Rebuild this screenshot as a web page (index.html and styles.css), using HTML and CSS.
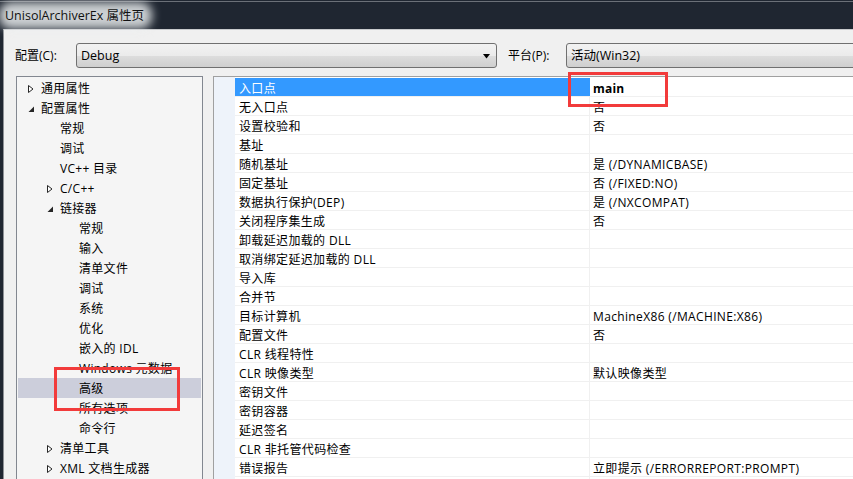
FILE: index.html
```html
<!DOCTYPE html>
<html lang="zh-CN">
<head>
<meta charset="utf-8">
<title>UnisolArchiverEx 属性页</title>
<link rel="stylesheet" href="styles.css">
</head>
<body>
<div class="titlebar"><span class="title">UnisolArchiverEx 属性页</span></div>
<div class="window">
  <div class="toolbar">
    <span class="label label-config">配置(C):</span>
    <div class="combo combo-config">
      <span class="combo-text">Debug</span>
      <svg class="combo-arrow" width="8" height="5" viewBox="0 0 8 5"><path d="M0 0H7L3.5 4.5Z" fill="#000"/></svg>
    </div>
    <span class="label label-platform">平台(P):</span>
    <div class="combo combo-platform">
      <span class="combo-text">活动(Win32)</span>
    </div>
  </div>
  <div class="panes">
    <div class="tree">
      <div class="node lvl0"><svg class="tw" width="8" height="10" viewBox="0 0 8 10"><path d="M1.5 1.5L6 5L1.5 8.5Z" fill="#fff" stroke="#262626" stroke-width="1"/></svg><span>通用属性</span></div>
      <div class="node lvl0"><svg class="tw" width="8" height="10" viewBox="0 0 8 10"><path d="M7 2.5V8H1.5Z" fill="#262626"/></svg><span>配置属性</span></div>
      <div class="node lvl1 leaf"><span>常规</span></div>
      <div class="node lvl1 leaf"><span>调试</span></div>
      <div class="node lvl1 leaf"><span>VC++ 目录</span></div>
      <div class="node lvl1"><svg class="tw" width="8" height="10" viewBox="0 0 8 10"><path d="M1.5 1.5L6 5L1.5 8.5Z" fill="#fff" stroke="#262626" stroke-width="1"/></svg><span>C/C++</span></div>
      <div class="node lvl1"><svg class="tw" width="8" height="10" viewBox="0 0 8 10"><path d="M7 2.5V8H1.5Z" fill="#262626"/></svg><span>链接器</span></div>
      <div class="node lvl2 leaf"><span>常规</span></div>
      <div class="node lvl2 leaf"><span>输入</span></div>
      <div class="node lvl2 leaf"><span>清单文件</span></div>
      <div class="node lvl2 leaf"><span>调试</span></div>
      <div class="node lvl2 leaf"><span>系统</span></div>
      <div class="node lvl2 leaf"><span>优化</span></div>
      <div class="node lvl2 leaf"><span>嵌入的 IDL</span></div>
      <div class="node lvl2 leaf"><span>Windows 元数据</span></div>
      <div class="node lvl2 leaf selected"><span>高级</span></div>
      <div class="node lvl2 leaf"><span>所有选项</span></div>
      <div class="node lvl2 leaf"><span>命令行</span></div>
      <div class="node lvl1"><svg class="tw" width="8" height="10" viewBox="0 0 8 10"><path d="M1.5 1.5L6 5L1.5 8.5Z" fill="#fff" stroke="#262626" stroke-width="1"/></svg><span>清单工具</span></div>
      <div class="node lvl1"><svg class="tw" width="8" height="10" viewBox="0 0 8 10"><path d="M1.5 1.5L6 5L1.5 8.5Z" fill="#fff" stroke="#262626" stroke-width="1"/></svg><span>XML 文档生成器</span></div>
    </div>
    <div class="grid">
      <div class="gutter"></div>
      <div class="rows">
        <div class="row selected"><div class="name">入口点</div><div class="value bold">main</div></div>
        <div class="row"><div class="name">无入口点</div><div class="value">否</div></div>
        <div class="row"><div class="name">设置校验和</div><div class="value">否</div></div>
        <div class="row"><div class="name">基址</div><div class="value"></div></div>
        <div class="row"><div class="name">随机基址</div><div class="value">是 (/DYNAMICBASE)</div></div>
        <div class="row"><div class="name">固定基址</div><div class="value">否 (/FIXED:NO)</div></div>
        <div class="row"><div class="name">数据执行保护(DEP)</div><div class="value">是 (/NXCOMPAT)</div></div>
        <div class="row"><div class="name">关闭程序集生成</div><div class="value">否</div></div>
        <div class="row"><div class="name">卸载延迟加载的 DLL</div><div class="value"></div></div>
        <div class="row"><div class="name">取消绑定延迟加载的 DLL</div><div class="value"></div></div>
        <div class="row"><div class="name">导入库</div><div class="value"></div></div>
        <div class="row"><div class="name">合并节</div><div class="value"></div></div>
        <div class="row"><div class="name">目标计算机</div><div class="value">MachineX86 (/MACHINE:X86)</div></div>
        <div class="row"><div class="name">配置文件</div><div class="value">否</div></div>
        <div class="row"><div class="name">CLR 线程特性</div><div class="value"></div></div>
        <div class="row"><div class="name">CLR 映像类型</div><div class="value">默认映像类型</div></div>
        <div class="row"><div class="name">密钥文件</div><div class="value"></div></div>
        <div class="row"><div class="name">密钥容器</div><div class="value"></div></div>
        <div class="row"><div class="name">延迟签名</div><div class="value"></div></div>
        <div class="row"><div class="name">CLR 非托管代码检查</div><div class="value"></div></div>
        <div class="row"><div class="name">错误报告</div><div class="value">立即提示 (/ERRORREPORT:PROMPT)</div></div>
        <div class="row"><div class="name">&nbsp;</div><div class="value"></div></div>
      </div>
    </div>
  </div>
</div>
<div class="mark mark-main"></div>
<div class="mark mark-adv"></div>
</body>
</html>
```

FILE: styles.css
```css
html, body {
  margin: 0;
  padding: 0;
  width: 853px;
  height: 479px;
  overflow: hidden;
  background: #1f2631;
  font-family: "Open Sans", "Noto Sans CJK SC", sans-serif;
  font-size: 12px;
  color: #000;
  position: relative;
}

.titlebar {
  height: 29px;
  box-sizing: border-box;
  border-top: 1px solid #1f2631;
  box-shadow: inset 0 1px 0 #6b7078;
  background: #1f2631;
  display: flex;
  align-items: center;
  padding-left: 5px;
}

.title {
  position: relative;
  font-size: 12.5px;
  line-height: 16px;
  color: #111;
  padding-top: 1px;
  z-index: 0;
  isolation: isolate;
}

.title::before {
  content: "";
  position: absolute;
  left: -6px;
  right: -8px;
  top: -5px;
  bottom: -5px;
  background: rgba(235, 238, 240, 0.85);
  border-radius: 12px;
  filter: blur(5px);
  z-index: -1;
}

.window {
  margin-left: 3px;
  border-left: 1px solid #8e9196;
  border-top: 1px solid #c8cacd;
  background: #f0f0f0;
  height: 460px;
}

.toolbar {
  display: flex;
  align-items: center;
  padding: 13px 0 8px 11px;
  height: 25px;
}

.label {
  line-height: 16px;
  white-space: nowrap;
  flex: none;
  padding-top: 1px;
}

.label-config { width: 61px; }
.label-platform { width: 58px; margin-left: 11px; }

.combo {
  height: 25px;
  box-sizing: border-box;
  border: 1px solid #707070;
  border-radius: 3px;
  background: linear-gradient(#f2f2f2 0%, #ebebeb 50%, #dddddd 51%, #cfcfcf 100%);
  display: flex;
  align-items: center;
  padding-left: 4px;
  position: relative;
  flex: none;
}

.combo-config { width: 421px; }
.combo-platform { width: 320px; }

.combo-text {
  line-height: 16px;
  font-size: 12.5px;
  padding-top: 1px;
}

.combo-arrow {
  position: absolute;
  right: 5px;
  top: 10px;
}

.panes {
  display: flex;
  padding-left: 12px;
  gap: 10px;
  align-items: flex-start;
}

.tree {
  width: 187px;
  height: 420px;
  box-sizing: border-box;
  border: 1px solid #828790;
  background: #f5f5f5;
  padding: 1px 1px 0 1px;
  flex: none;
  letter-spacing: 0.3px;
}

.node {
  height: 20px;
  box-sizing: border-box;
  padding-top: 2px;
  display: flex;
  align-items: center;
  line-height: 16px;
  white-space: nowrap;
}

.node .tw {
  width: 8px;
  height: 10px;
  margin-right: 6px;
  flex: none;
}

.lvl0 { padding-left: 9px; }
.lvl1 { padding-left: 28px; }
.lvl2 { padding-left: 47px; }
.lvl1.leaf { padding-left: 42px; }
.lvl2.leaf { padding-left: 61px; }

.node.selected {
  background: #cccedb;
}

.grid {
  flex: 1;
  height: 420px;
  display: flex;
  border: 1px solid #a0a0a0;
  border-right: none;
  background: #fff;
  margin-right: -20px;
  letter-spacing: 0.35px;
}

.gutter {
  width: 21px;
  background: #eef3fa;
  flex: none;
}

.rows {
  flex: 1;
  padding-top: 1px;
}

.row {
  display: flex;
  height: 19px;
  box-sizing: border-box;
  border-bottom: 1px solid #f0f0f0;
}

.name {
  width: 355px;
  flex: none;
  padding: 3px 0 0 4px;
  box-sizing: border-box;
  line-height: 15px;
  white-space: nowrap;
  border-right: 1px solid #f0f0f0;
}

.value {
  flex: 1;
  padding: 3px 0 0 3px;
  line-height: 15px;
  white-space: nowrap;
}

.row.selected .name {
  background: #3399ff;
  color: #fff;
  border-right-color: #3399ff;
}

.bold { font-weight: bold; letter-spacing: 0.2px; }

.mark {
  position: absolute;
  border: 3px solid #f23b3b;
  box-sizing: border-box;
}

.mark-main {
  left: 568px;
  top: 72px;
  width: 100px;
  height: 35px;
}

.mark-adv {
  left: 54px;
  top: 367px;
  width: 126px;
  height: 44px;
}
```
